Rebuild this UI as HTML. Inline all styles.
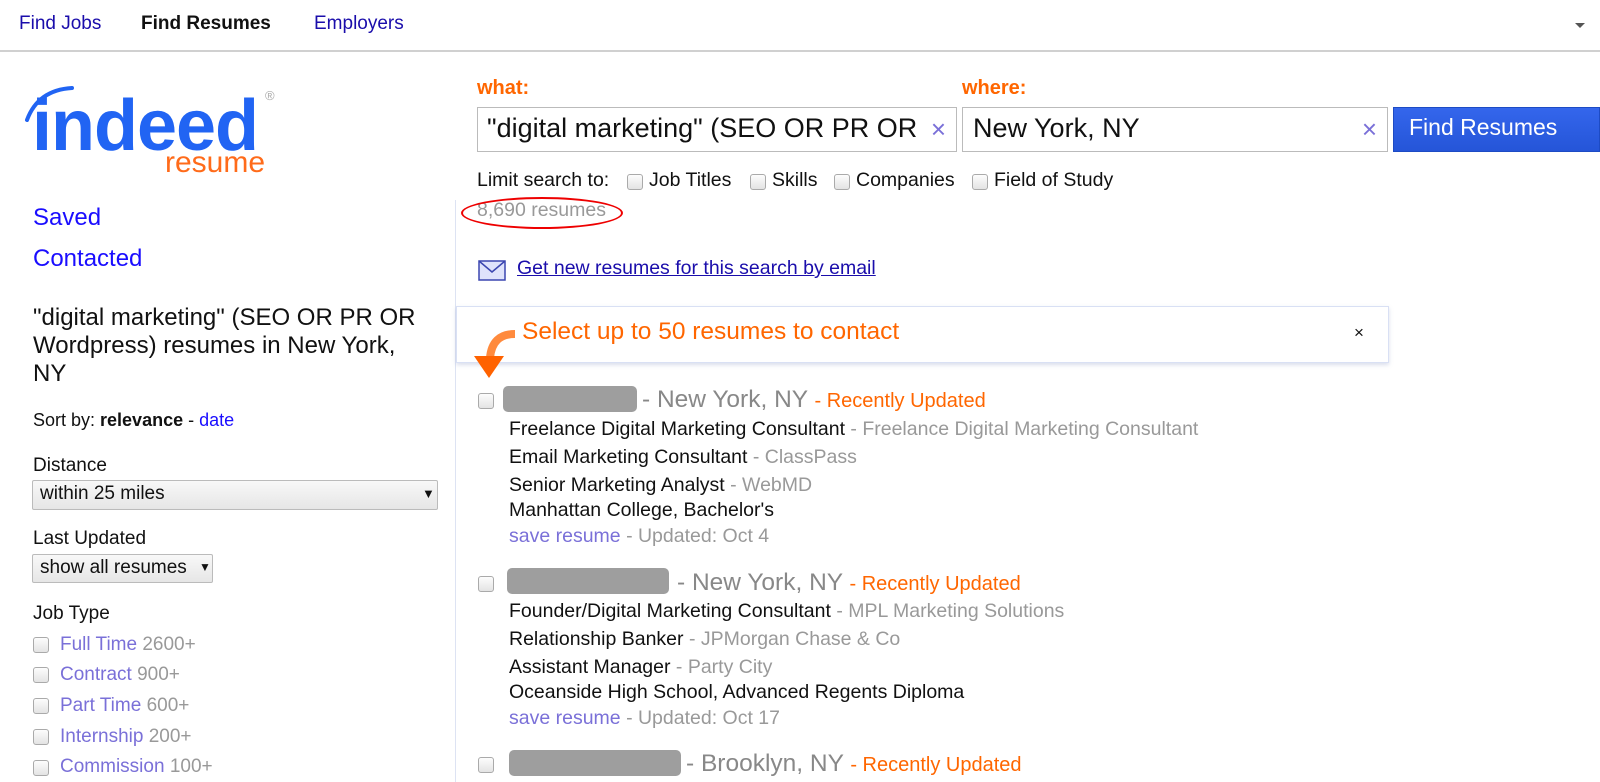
<!DOCTYPE html>
<html><head><meta charset="utf-8"><style>
body{margin:0;width:1600px;height:782px;overflow:hidden;background:#fff;font-family:"Liberation Sans",Arial,sans-serif;position:relative}
.t{position:absolute;white-space:nowrap;line-height:1}
.cb{position:absolute;width:14px;height:14px;border:1px solid #aaa;border-radius:3px;background:linear-gradient(#fdfdfd,#e3e3e3)}
.g{color:#999}.o{color:#f60}.p{color:#7a70d8}.k{color:#111}
.blk{position:absolute;background:#9e9e9e;border-radius:5px;height:26px}
</style></head><body>
<!-- nav -->
<div class="t" style="left:19px;top:14px;font-size:19px;color:#1a0dab">Find Jobs</div>
<div class="t" style="left:141px;top:14px;font-size:19px;font-weight:bold;color:#111">Find Resumes</div>
<div class="t" style="left:314px;top:14px;font-size:19px;color:#1a0dab">Employers</div>
<div style="position:absolute;left:1575px;top:23px;border-left:5px solid transparent;border-right:5px solid transparent;border-top:5px solid #555"></div>
<div style="position:absolute;left:0;top:50px;width:1600px;height:2px;background:#d0d0d0"></div>
<!-- logo -->
<svg style="position:absolute;left:24px;top:84px" width="60" height="40"><path d="M3 36 Q14 6 48 4" stroke="#2164f3" stroke-width="4" fill="none" stroke-linecap="round"/></svg>
<div class="t" style="left:32px;top:90px;font-size:72px;font-weight:bold;color:#2164f3;letter-spacing:-1px">indeed</div>
<div class="t" style="left:265px;top:89px;font-size:13px;color:#aaa">®</div>
<div class="t" style="left:165px;top:148px;font-size:30px;color:#ff6b1a">resume</div>
<div class="t" style="left:33px;top:206px;font-size:24px;color:#1a0dff">Saved</div>
<div class="t" style="left:33px;top:247px;font-size:24px;color:#1a0dff">Contacted</div>
<div class="t" style="left:33px;top:304px;font-size:24px;line-height:28px;color:#111;white-space:normal;width:400px">"digital marketing" (SEO OR PR OR Wordpress) resumes in New York, NY</div>
<div class="t" style="left:33px;top:411px;font-size:18px;color:#111">Sort by: <b>relevance</b> - <span style="color:#1a0dff">date</span></div>
<div class="t" style="left:33px;top:456px;font-size:19px;color:#111">Distance</div>
<div style="position:absolute;left:32px;top:480px;width:404px;height:28px;border:1px solid #bbb;border-radius:2px;background:linear-gradient(#f8f8f8,#e6e6e6)"></div>
<div class="t" style="left:40px;top:484px;font-size:19px;color:#111">within 25 miles</div>
<div class="t" style="left:422px;top:487px;font-size:13px;color:#111">▼</div>
<div class="t" style="left:33px;top:529px;font-size:19px;color:#111">Last Updated</div>
<div style="position:absolute;left:32px;top:554px;width:179px;height:27px;border:1px solid #bbb;border-radius:2px;background:linear-gradient(#f8f8f8,#e6e6e6)"></div>
<div class="t" style="left:40px;top:558px;font-size:19px;color:#111">show all resumes</div>
<div class="t" style="left:199px;top:561px;font-size:12px;color:#111">▼</div>
<div class="t" style="left:33px;top:604px;font-size:19px;color:#111">Job Type</div>
<div class="cb" style="left:33px;top:637px"></div><div class="t p" style="left:60px;top:635px;font-size:19px">Full Time <span class="g">2600+</span></div>
<div class="cb" style="left:33px;top:667px"></div><div class="t p" style="left:60px;top:665px;font-size:19px">Contract <span class="g">900+</span></div>
<div class="cb" style="left:33px;top:698px"></div><div class="t p" style="left:60px;top:696px;font-size:19px">Part Time <span class="g">600+</span></div>
<div class="cb" style="left:33px;top:729px"></div><div class="t p" style="left:60px;top:727px;font-size:19px">Internship <span class="g">200+</span></div>
<div class="cb" style="left:33px;top:760px"></div><div class="t p" style="left:60px;top:757px;font-size:19px">Commission <span class="g">100+</span></div>
<div style="position:absolute;left:455px;top:200px;width:1px;height:582px;background:#dde3f3"></div>
<!-- search -->
<div class="t" style="left:477px;top:78px;font-size:20px;font-weight:bold;color:#f60">what:</div>
<div class="t" style="left:962px;top:78px;font-size:20px;font-weight:bold;color:#f60">where:</div>
<div style="position:absolute;left:477px;top:107px;width:478px;height:43px;border:1px solid #bbb;overflow:hidden;background:#fff"><div class="t" style="left:9px;top:7px;font-size:27px;color:#111">"digital marketing" (SEO OR PR OR Wordpress)</div><div style="position:absolute;right:0;top:0;width:40px;height:43px;background:#fff"></div><div class="t" style="right:10px;top:8px;font-size:26px;color:#7a70d8">×</div></div>
<div style="position:absolute;left:962px;top:107px;width:424px;height:43px;border:1px solid #bbb;background:#fff"><div class="t" style="left:10px;top:7px;font-size:27px;color:#111">New York, NY</div><div class="t" style="right:10px;top:8px;font-size:26px;color:#7a70d8">×</div></div>
<div style="position:absolute;left:1393px;top:107px;width:207px;height:45px;background:linear-gradient(#3466ec,#2555d8);border:1px solid #1d4bc4;box-sizing:border-box"></div>
<div class="t" style="left:1409px;top:116px;font-size:23px;color:#fff">Find Resumes</div>
<div class="t" style="left:477px;top:171px;font-size:19.5px;color:#111">Limit search to:</div>
<div class="cb" style="left:627px;top:174px"></div><div class="t" style="left:649px;top:171px;font-size:19.5px;color:#111">Job Titles</div>
<div class="cb" style="left:750px;top:174px"></div><div class="t" style="left:772px;top:171px;font-size:19.5px;color:#111">Skills</div>
<div class="cb" style="left:834px;top:174px"></div><div class="t" style="left:856px;top:171px;font-size:19.5px;color:#111">Companies</div>
<div class="cb" style="left:972px;top:174px"></div><div class="t" style="left:994px;top:171px;font-size:19.5px;color:#111">Field of Study</div>
<div class="t g" style="left:477px;top:201px;font-size:19.5px">8,690 resumes</div>
<div style="position:absolute;left:461px;top:197px;width:158px;height:28px;border:2px solid #e00;border-radius:50%"></div>
<svg style="position:absolute;left:478px;top:260px" width="28" height="21"><rect x="1" y="1" width="26" height="19" fill="#dfe3fb" stroke="#3b46b0" stroke-width="1.5"/><path d="M1 1 L14 12 L27 1" stroke="#3b46b0" stroke-width="1.5" fill="none"/></svg>
<div class="t" style="left:517px;top:259px;font-size:19.5px;color:#1a0dab;text-decoration:underline">Get new resumes for this search by email</div>
<!-- banner -->
<div style="position:absolute;left:456px;top:306px;width:931px;height:55px;border:1px solid #d9e0f4;box-shadow:0 2px 4px rgba(150,160,200,.35);background:#fff"></div>
<div class="t o" style="left:522px;top:320px;font-size:24.5px">Select up to 50 resumes to contact</div>
<div class="t" style="left:1354px;top:324px;font-size:17px;color:#111">×</div>
<svg style="position:absolute;left:470px;top:330px" width="45" height="52"><path d="M45 4 Q22 4 20 28" stroke="#ff8a3d" stroke-width="8" fill="none"/><path d="M4 26 L34 26 L19 48 Z" fill="#ff6200"/></svg>
<!-- result 1 -->
<div class="cb" style="left:478px;top:393px"></div>
<div class="blk" style="left:503px;top:386px;width:134px"></div>
<div class="t" style="left:642px;top:388px;font-size:24.5px;color:#888">- New York, NY <span class="o" style="font-size:20px">- Recently Updated</span></div>
<div class="t k" style="left:509px;top:420px;font-size:19.5px">Freelance Digital Marketing Consultant <span class="g">- Freelance Digital Marketing Consultant</span></div>
<div class="t k" style="left:509px;top:448px;font-size:19.5px">Email Marketing Consultant <span class="g">- ClassPass</span></div>
<div class="t k" style="left:509px;top:476px;font-size:19.5px">Senior Marketing Analyst <span class="g">- WebMD</span></div>
<div class="t k" style="left:509px;top:501px;font-size:19.5px">Manhattan College, Bachelor's</div>
<div class="t p" style="left:509px;top:527px;font-size:19.5px">save resume <span class="g">- Updated: Oct 4</span></div>
<!-- result 2 -->
<div class="cb" style="left:478px;top:576px"></div>
<div class="blk" style="left:507px;top:568px;width:162px"></div>
<div class="t" style="left:677px;top:571px;font-size:24.5px;color:#888">- New York, NY <span class="o" style="font-size:20px">- Recently Updated</span></div>
<div class="t k" style="left:509px;top:602px;font-size:19.5px">Founder/Digital Marketing Consultant <span class="g">- MPL Marketing Solutions</span></div>
<div class="t k" style="left:509px;top:630px;font-size:19.5px">Relationship Banker <span class="g">- JPMorgan Chase &amp; Co</span></div>
<div class="t k" style="left:509px;top:658px;font-size:19.5px">Assistant Manager <span class="g">- Party City</span></div>
<div class="t k" style="left:509px;top:683px;font-size:19.5px">Oceanside High School, Advanced Regents Diploma</div>
<div class="t p" style="left:509px;top:709px;font-size:19.5px">save resume <span class="g">- Updated: Oct 17</span></div>
<!-- result 3 -->
<div class="cb" style="left:478px;top:757px"></div>
<div class="blk" style="left:509px;top:750px;width:172px"></div>
<div class="t" style="left:686px;top:752px;font-size:24.5px;color:#888">- Brooklyn, NY <span class="o" style="font-size:20px">- Recently Updated</span></div>
</body></html>
